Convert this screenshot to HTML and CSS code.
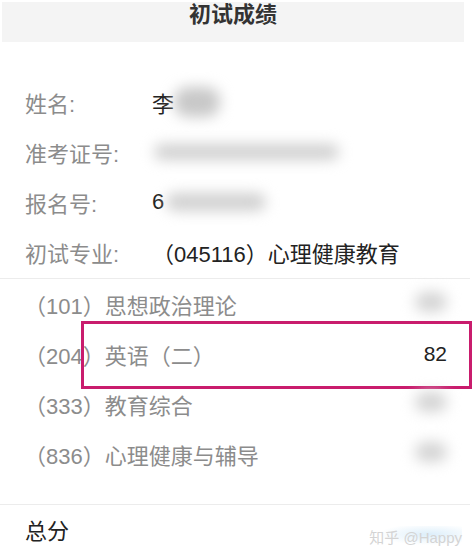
FILE: index.html
```html
<!DOCTYPE html>
<html lang="zh-CN">
<head>
  <meta charset="UTF-8">
  <meta name="viewport" content="width=device-width, initial-scale=1.0">
  <title>初试成绩</title>
  <link rel="stylesheet" href="styles.css">
</head>
<body>
  <div class="header">初试成绩</div>

  <!-- 考生信息 -->
  <div class="info">
    <div class="row">
      <span class="label">姓名:</span>
      <span class="value">李<span class="blur blur-name"></span></span>
    </div>
    <div class="row">
      <span class="label">准考证号:</span>
      <span class="value"><span class="blur blur-long"></span></span>
    </div>
    <div class="row">
      <span class="label">报名号:</span>
      <span class="value">6<span class="blur blur-mid"></span></span>
    </div>
    <div class="row">
      <span class="label">初试专业:</span>
      <span class="value">（045116）心理健康教育</span>
    </div>
  </div>

  <!-- 科目成绩 -->
  <div class="subjects">
    <div class="subject">
      <span class="name">（101）思想政治理论</span>
      <span class="score"><span class="blur blur-score"></span></span>
    </div>
    <div class="subject marked">
      <span class="name">（204）英语（二）</span>
      <span class="score">82</span>
      <span class="mark"></span>
    </div>
    <div class="subject">
      <span class="name">（333）教育综合</span>
      <span class="score"><span class="blur blur-score"></span></span>
    </div>
    <div class="subject">
      <span class="name">（836）心理健康与辅导</span>
      <span class="score"><span class="blur blur-score"></span></span>
    </div>
  </div>

  <div class="total">
    <span class="total-label">总分</span>
    <span class="watermark">知乎 @Happy</span>
  </div>
</body>
</html>
```

FILE: styles.css
```css
body {
  margin: 0;
  background: white;
  font-family: "Liberation Sans", "Noto Sans CJK SC", sans-serif;
  width: 474px;
  height: 557px;
  overflow: hidden;
}
.header {
  margin: 2px 10px 0 2px;
  height: 40px;
  background: #f4f4f4;
  text-align: center;
  font-family: "Liberation Sans", "Noto Sans CJK SC", sans-serif;
  font-weight: bold;
  font-size: 22px;
  line-height: 25px;
  color: #333;
}
.info {
  padding-top: 35px;
  padding-bottom: 1px;
  border-bottom: 1px solid #ececec;
  margin-right: 4px;
}
.row {
  display: flex;
  align-items: center;
  height: 50px;
  padding-left: 25px;
  font-size: 22px;
}
.label {
  width: 127px;
  color: #8c8c8c;
}
.value {
  color: #222;
  display: flex;
  align-items: center;
}
.blur {
  display: inline-block;
  background: #c8c8c8;
  border-radius: 14px;
  filter: blur(7px);
}
.blur-name {
  width: 46px;
  height: 30px;
  margin-left: 0;
}
.blur-long {
  width: 185px;
  height: 16px;
  margin-left: 2px;
  background: #d0d0d0;
}
.blur-mid {
  width: 100px;
  height: 18px;
  margin-left: 2px;
  background: #d0d0d0;
}
.blur-score {
  width: 32px;
  height: 20px;
  background: #d4d4d4;
}
.subjects {
  padding-bottom: 25px;
  border-bottom: 1px solid #ececec;
  margin-right: 4px;
}
.subject {
  position: relative;
  display: flex;
  align-items: center;
  justify-content: space-between;
  height: 50px;
  padding-left: 24px;
  padding-right: 23px;
  font-size: 22px;
}
.name {
  color: #8c8c8c;
}
.score {
  color: #222;
  font-size: 21px;
}
.mark {
  position: absolute;
  left: 81px;
  top: -8px;
  width: 391px;
  height: 68px;
  border: 3px solid #c91c6d;
  box-sizing: border-box;
}
.total {
  display: flex;
  align-items: center;
  justify-content: space-between;
  height: 48px;
  padding-left: 25px;
  padding-right: 12px;
}
.total-label {
  font-family: "Noto Sans CJK SC", sans-serif;
  font-size: 22px;
  color: #222;
}
.watermark {
  margin-top: 14px;
  font-size: 15px;
  color: #d4d4d4;
  background: radial-gradient(ellipse at 65% 40%, #dceefa 0%, rgba(255,255,255,0) 60%);
}
```
